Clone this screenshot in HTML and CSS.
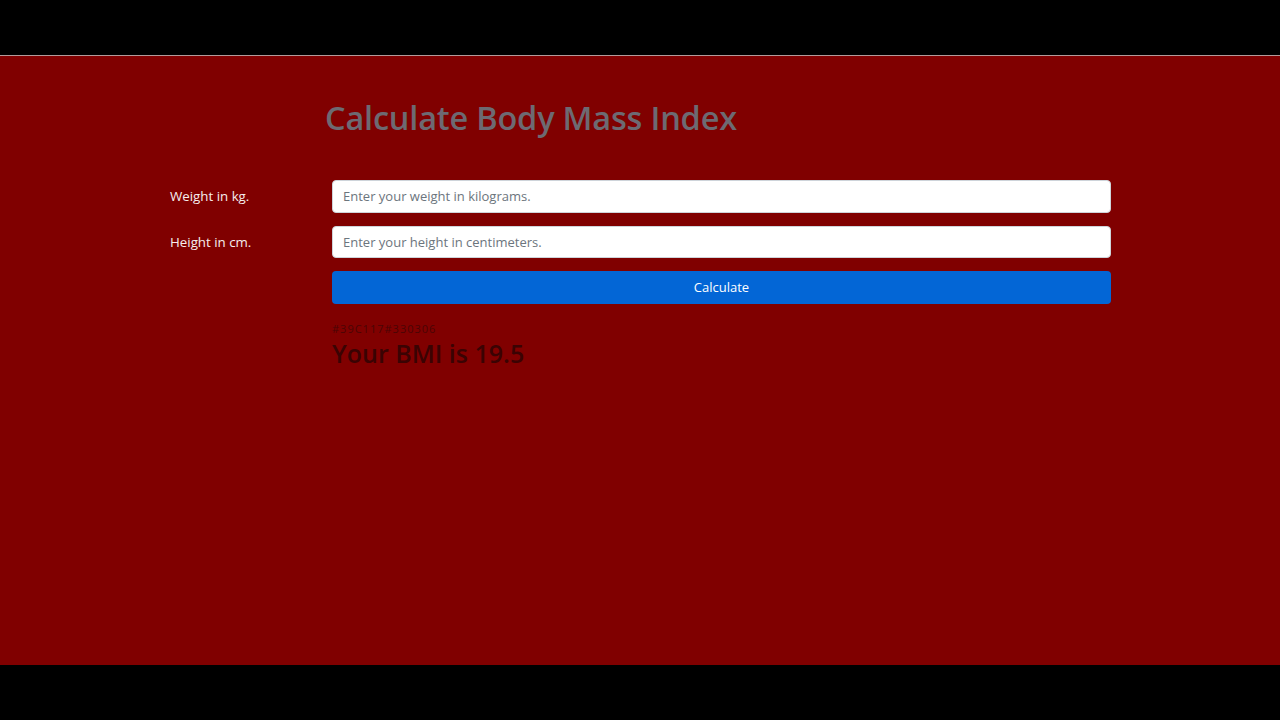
FILE: index.html
```html
<!DOCTYPE html>
<html>
<head>
<meta charset="utf-8">
<link rel="stylesheet" href="styles.css">
</head>
<body>
<div class="bar-top"></div>
<main class="stage">
  <h1 class="title">Calculate Body Mass Index</h1>
  <form class="form">
    <label class="label" for="w">Weight in kg.</label>
    <input class="input" id="w" type="text" placeholder="Enter your weight in kilograms.">
    <label class="label" for="h">Height in cm.</label>
    <input class="input" id="h" type="text" placeholder="Enter your height in centimeters.">
    <span></span>
    <button class="btn" type="button">Calculate</button>
    <span></span>
    <div class="result">
      <div class="hex">#39C117#330306</div>
      <div class="bmi">Your BMI is 19.5</div>
    </div>
  </form>
</main>
<div class="bar-bottom"></div>
</body>
</html>
```
FILE: styles.css
```css
html, body {
  margin: 0;
  padding: 0;
  background: #000;
  height: 720px;
  overflow: hidden;
  font-family: "Open Sans", "Noto Sans", sans-serif;
}
.bar-top {
  height: 55px;
  background: #000;
  border-bottom: 1px solid #b39a9a;
}
.stage {
  height: 609px;
  background: #800000;
  box-sizing: border-box;
  padding: 37px 0 0 170px;
}
.bar-bottom {
  height: 55px;
  background: #000;
}
.title {
  margin: 0 0 37px 155px;
  font-size: 32.5px;
  font-weight: 600;
  color: #6d6a72;
  line-height: 50px;
  letter-spacing: -0.2px;
}
.form {
  display: grid;
  grid-template-columns: 162px 779px;
  row-gap: 13px;
  align-items: center;
}
.label {
  color: #f6eeee;
  font-size: 13.3px;
}
.input {
  height: 32.5px;
  box-sizing: border-box;
  border: 1px solid #ced4da;
  border-radius: 4px;
  background: #fff;
  padding: 0 10px;
  font-family: inherit;
  font-size: 13px;
  outline: none;
}
.input::placeholder {
  color: #6c757d;
}
.btn {
  height: 32.5px;
  border: none;
  border-radius: 4px;
  background: #0366d6;
  color: #fff;
  font-family: inherit;
  font-size: 13px;
  padding: 0;
}
.result {
  padding-top: 4px;
}
.hex {
  font-size: 11px;
  letter-spacing: 1px;
  color: #4a0505;
  line-height: 15px;
}
.bmi {
  font-size: 25px;
  font-weight: 600;
  color: #3a0303;
  line-height: 34px;
}
```
